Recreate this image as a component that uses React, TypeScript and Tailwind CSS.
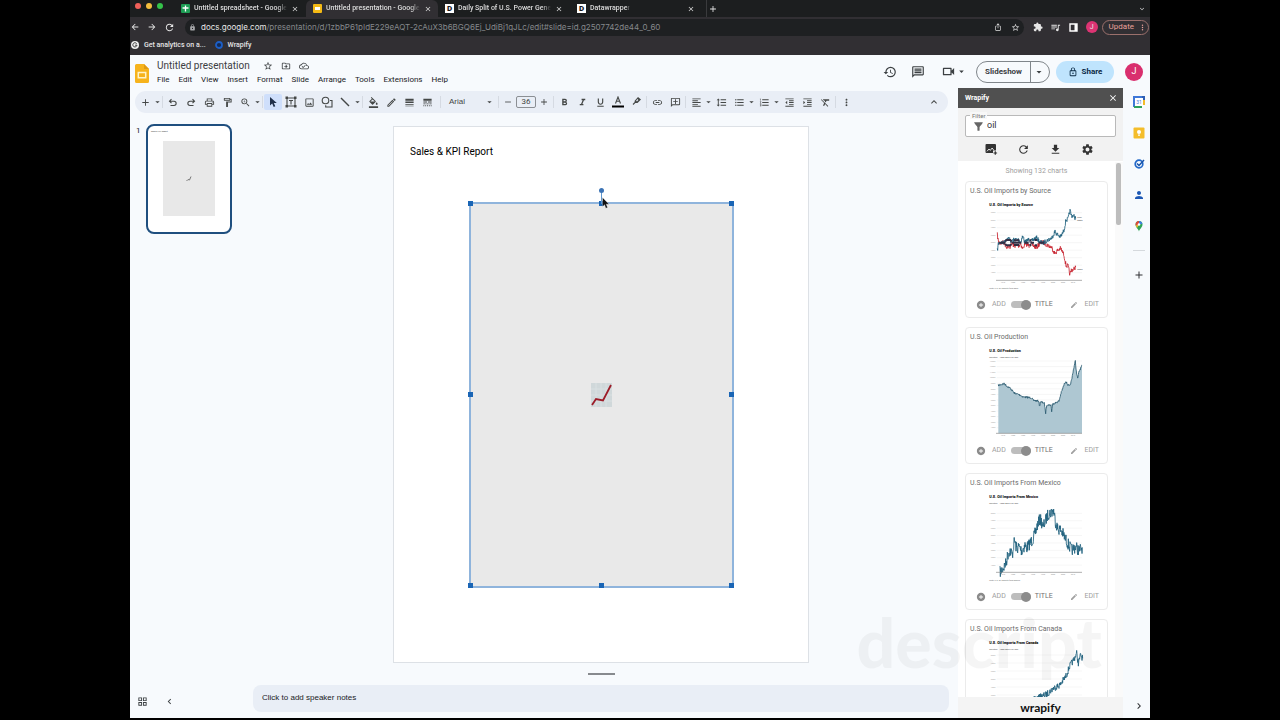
import type { ReactNode } from 'react';
import type { IconType } from 'react-icons';
import {
  MdAdd, MdAddCircle, MdArrowBack, MdArrowDropDown, MdArrowForward, MdChevronLeft, MdChevronRight, MdClose,
  MdEdit, MdExpandLess, MdExpandMore, MdExtension, MdFileDownload, MdFilterAlt, MdFormatAlignLeft, MdFormatBold,
  MdFormatClear, MdFormatColorFill, MdFormatIndentDecrease, MdFormatIndentIncrease, MdFormatItalic,
  MdFormatLineSpacing, MdFormatListBulleted, MdFormatListNumbered, MdFormatUnderlined, MdHistory, MdInsertLink,
  MdIosShare, MdLineStyle, MdLineWeight, MdLock, MdMoreVert, MdOutlineAddComment, MdOutlineCloudDone,
  MdOutlineComment, MdOutlineDriveFileMove, MdOutlineEdit, MdOutlineFormatPaint, MdOutlineGridView, MdOutlineImage,
  MdOutlineLock, MdOutlinePrint, MdOutlineVideocam, MdPerson, MdQueueMusic, MdRefresh, MdRemove, MdSettings,
  MdStarBorder, MdZoomIn,
} from 'react-icons/md';

type Point = [number, number];

interface Chart {
  title: string;
  subtitle?: string;
  footnote?: string;
  lines: { points: Point[]; noise: number; color: string; area?: boolean }[];
  gridTop: number;
  gridStep: number;
  axis: number;
}

const MENUS = ['File', 'Edit', 'View', 'Insert', 'Format', 'Slide', 'Arrange', 'Tools', 'Extensions', 'Help'];

const BLUE = '#1d5f7c';
const RED = '#c7202c';

const SOURCE: Point[] = [
  [34, 152], [37, 132], [42, 126], [50, 129], [56, 126], [60, 116], [72, 116], [76, 126], [84, 119], [98, 119],
  [104, 126], [109, 111], [113, 113], [116, 127], [128, 119], [136, 124], [146, 116], [152, 114], [160, 124],
  [170, 130], [182, 122], [197, 114], [207, 95], [214, 104], [224, 111], [234, 91], [240, 60], [246, 58],
  [252, 32], [256, 46], [263, 48], [269, 55],
];
const MIRROR: Point[] = SOURCE.map(([x, y]) => [x, 256 - y]);

const CHARTS: Chart[] = [
  {
    title: 'U.S. Oil Imports by Source',
    footnote: 'Note: U.S. Oil Imports from Opec',
    lines: [
      { points: MIRROR, noise: 14, color: RED },
      { points: SOURCE, noise: 14, color: BLUE },
    ],
    gridTop: 38,
    gridStep: 22.5,
    axis: 241,
  },
  {
    title: 'U.S. Oil Production',
    subtitle: 'Monthly · 1000 Bbls Per Day',
    lines: [
      {
        points: [
          [37, 118], [55, 113], [62, 120], [72, 126], [85, 141], [102, 147], [112, 153], [135, 155], [142, 163],
          [158, 165], [161, 182], [163, 167], [175, 172], [179, 201], [182, 177], [195, 177], [197, 196], [200, 174],
          [210, 170], [219, 165], [225, 142], [232, 122], [239, 105], [245, 116], [251, 121], [257, 102], [262, 72],
          [268, 45], [271, 77], [275, 98], [279, 77], [288, 59],
        ],
        noise: 6,
        color: '#2a5a70',
        area: true,
      },
    ],
    gridTop: 45,
    gridStep: 16.7,
    axis: 262,
  },
  {
    title: 'U.S. Oil Imports From Mexico',
    subtitle: 'Monthly · 1000 Bbls Per Day',
    footnote: 'Note: U.S. Oil Imports from Mexico',
    lines: [
      {
        points: [
          [42, 240], [46, 236], [54, 224], [60, 214], [65, 189], [72, 174], [79, 189], [85, 145], [92, 170], [99, 164],
          [107, 176], [117, 160], [122, 168], [132, 154], [142, 140], [149, 119], [157, 89], [163, 82], [172, 104],
          [179, 84], [187, 66], [197, 60], [203, 57], [209, 90], [215, 110], [225, 114], [235, 134], [245, 154],
          [257, 174], [269, 164], [279, 176], [289, 166],
        ],
        noise: 36,
        color: BLUE,
      },
    ],
    gridTop: 64,
    gridStep: 22.2,
    axis: 241,
  },
  {
    title: 'U.S. Oil Imports From Canada',
    subtitle: 'Monthly · 1000 Bbls Per Day',
    lines: [
      {
        points: [
          [42, 230], [90, 214], [130, 192], [162, 177], [182, 169], [202, 151], [222, 141], [232, 126], [242, 111],
          [250, 86], [260, 71], [272, 46], [277, 76], [284, 51], [290, 61],
        ],
        noise: 20,
        color: BLUE,
      },
    ],
    gridTop: 51,
    gridStep: 24,
    axis: 241,
  },
];

// Adds repeatable jitter between the anchor points, so a series reads like monthly data
function trace(points: Point[], noise: number) {
  const out: string[] = [];
  let n = 7;
  for (let i = 0; i < points.length - 1; i++) {
    const [x0, y0] = points[i];
    const [x1, y1] = points[i + 1];
    const steps = Math.max(1, Math.round(x1 - x0));
    for (let s = 0; s < steps; s++) {
      n = (n * 16807) % 2147483647;
      const jitter = (n / 2147483647 - 0.5) * noise;
      out.push(`${(x0 + ((x1 - x0) * s) / steps).toFixed(1)} ${(y0 + ((y1 - y0) * s) / steps + jitter).toFixed(1)}`);
    }
  }
  out.push(points[points.length - 1].join(' '));
  return 'M' + out.join('L');
}

function ChartPreview({ chart }: { chart: Chart }) {
  const rows = Math.round((chart.axis - chart.gridTop) / chart.gridStep);
  return (
    <svg viewBox="3 0 300 282" className="mx-auto mt-1 h-[94px] w-[100px] font-[Roboto]">
      <text x="10" y="19" fontSize="11" fontWeight="900" fill="#111">{chart.title}</text>
      {chart.subtitle && <text x="10" y="35" fontSize="7" fill="#555">{chart.subtitle}</text>}
      {Array.from({ length: rows }, (_, i) => (
        <g key={i}>
          <path d={`M32 ${chart.gridTop + i * chart.gridStep}H288`} stroke="#ececec" strokeWidth="1.5" />
          <text x="28" y={chart.gridTop + i * chart.gridStep + 2} fontSize="6" textAnchor="end" fill="#aaa">
            {(rows - i) * 1000}
          </text>
        </g>
      ))}
      {chart.lines.map((line, i) => {
        const d = trace(line.points, line.noise);
        return (
          <g key={i}>
            {line.area && <path d={`${d}V${chart.axis}H37Z`} fill="#aec7d2" />}
            <path d={d} fill="none" stroke={line.color} strokeWidth="2.5" strokeLinejoin="round" />
          </g>
        );
      })}
      {chart.lines.length > 1 && (
        <g>
          <path
            d="M40 128h18M58 124l3-4h12l3 4M58 132l3 4h12l3-4M78 128h28M84 121h16M84 135h16M117 128h11M130 121h6M130 135h6M134 128h10M146 120h7M146 136h7M158 128h16"
            fill="none"
            stroke="#332f45"
            strokeWidth="6"
          />
          <g fontSize="7" fill="#444">
            <text x="274" y="53">Non-</text>
            <text x="274" y="62">Opec</text>
            <text x="274" y="210">Opec</text>
          </g>
        </g>
      )}
      <path d={`M30 ${chart.axis}H288`} stroke="#888" strokeWidth="2" />
      {[1975, 1980, 1985, 1990, 1995, 2000, 2005, 2010].map((year, i) => (
        <text key={year} x={44 + i * 30} y={chart.axis + 9} fontSize="6" fill="#999">{year}</text>
      ))}
      {chart.footnote && <text x="10" y="268" fontSize="6" fill="#666">{chart.footnote}</text>}
    </svg>
  );
}

function ChartCard({ chart }: { chart: Chart }) {
  return (
    <article className="rounded-sm border border-[#ebebeb] bg-white px-1 pt-1 pb-1.5">
      <h3 className="text-[7px] leading-[10px] text-[#6b6b6b]">{chart.title}</h3>
      <ChartPreview chart={chart} />
      <div className="mt-1 flex h-[13px] items-center text-[7px] text-[#a0a0a0]">
        <button className="ml-1.5 flex items-center gap-1.5">
          <MdAddCircle className="size-[10px] text-[#8a8a8a]" />
          ADD
        </button>
        <label className="ml-[5px] flex items-center gap-1 text-[#707070]">
          <input
            type="checkbox"
            defaultChecked
            className="relative h-[7px] w-5 appearance-none rounded-full bg-[#bdbdbd] after:absolute after:-top-px after:right-0 after:size-[10px] after:rounded-full after:bg-[#8c8c8c]"
          />
          TITLE
        </label>
        <button className="mr-1 ml-auto flex items-center gap-1.5">
          <MdEdit className="size-2" />
          EDIT
        </button>
      </div>
    </article>
  );
}

function Tab({ icon, title, active }: { icon: ReactNode; title: string; active?: boolean }) {
  return (
    <div className={`flex w-[132px] items-center gap-1 px-[7px] ${active ? 'rounded-t-md bg-[#312f33]' : ''}`}>
      {icon}
      <span className="mask-r-from-90% text-[7px] font-medium whitespace-nowrap text-[#dcdcdc]">{title}</span>
      <button aria-label="Close tab" className="ml-auto"><MdClose className="size-[8px] text-[#dcdcdc]" /></button>
    </div>
  );
}

function SheetsIcon() {
  return (
    <svg viewBox="0 0 9 9" className="size-[9px] shrink-0">
      <rect width="9" height="9" rx="1" fill="#1e9e55" />
      <path d="M4.5 1.5v6M1.5 4h6" stroke="#fff" strokeWidth="1.3" />
    </svg>
  );
}

function SlidesTabIcon() {
  return (
    <svg viewBox="0 0 9 9" className="size-[9px] shrink-0">
      <rect width="9" height="9" rx="1" fill="#f5ba15" />
      <path d="M2 3h5v3H2z" fill="#fff" />
    </svg>
  );
}

function DatawrapperIcon() {
  return (
    <span className="flex size-[9px] shrink-0 items-center justify-center bg-white text-[8px] leading-none font-black text-[#18191b]">D</span>
  );
}

function Tool({ icon: Icon, label, flip }: { icon: IconType; label: string; flip?: boolean }) {
  return (
    <button aria-label={label} className="flex w-[18px] shrink-0 justify-center">
      <Icon className={flip ? 'size-[11px] -scale-x-100' : 'size-[11px]'} />
    </button>
  );
}

function Drawn({ label, children, active }: { label: string; children: ReactNode; active?: boolean }) {
  return (
    <button
      aria-label={label}
      className={`flex h-4 w-[18px] shrink-0 items-center justify-center rounded-xs ${active ? 'bg-[#cfdffb]' : ''}`}
    >
      <svg viewBox="0 0 12 12" className="size-[12px]" fill="none" stroke="currentColor" strokeWidth="1.1">{children}</svg>
    </button>
  );
}

const Caret = () => <MdArrowDropDown className="h-[10px] w-[7px] shrink-0 scale-150" />;
const Separator = () => <span className="mx-px h-3 w-px shrink-0 bg-[#d5dae2]" />;

function Toolbar() {
  return (
    <div className="mr-[10px] ml-[5px] flex h-[22px] items-center rounded-full bg-[#e9eef6] pl-px text-[#444746]">
      <Tool icon={MdAdd} label="New slide" />
      <Caret />
      <Separator />
      <Drawn label="Undo"><path d="M3.5 9.500h3.500a2 2 0 0 0 0-4.300H2.600M4.500 3.200 2.500 5.200l2 2" /></Drawn>
      <Drawn label="Redo"><path d="M8.500 9.500H5a2 2 0 0 1 0-4.300h4.400M7.500 3.200l2 2-2 2" /></Drawn>
      <Tool icon={MdOutlinePrint} label="Print" />
      <Tool icon={MdOutlineFormatPaint} label="Paint format" />
      <Tool icon={MdZoomIn} label="Zoom" />
      <Caret />
      <Separator />
      <Drawn label="Select" active>
        <path d="M3 1v8.600l2.200-2 1.500 3.300 1.600-.7-1.500-3.200h3z" fill="#1f2f4a" stroke="none" />
      </Drawn>
      <Drawn label="Text box">
        <path d="M2 2h8v8H2zM4 4.500h4M6 4.500V8.500" />
        <path d="M.5.500h2.500V3H.5zM9 .500h2.500V3H9zM.5 9H3v2.500H.5zM9 9h2.500v2.500H9z" fill="currentColor" stroke="none" />
      </Drawn>
      <Tool icon={MdOutlineImage} label="Insert image" />
      <Drawn label="Shape">
        <circle cx="4.500" cy="4.500" r="3.300" />
        <path d="M9 4.500h2v6.500H4.700V9.200" />
      </Drawn>
      <Drawn label="Line"><path d="m2 2 8 8" strokeWidth="1.400" /></Drawn>
      <Caret />
      <Separator />
      <Tool icon={MdFormatColorFill} label="Fill color" />
      <Tool icon={MdOutlineEdit} label="Border color" />
      <Tool icon={MdLineWeight} label="Border weight" />
      <Tool icon={MdLineStyle} label="Border dash" />
      <span className="mx-1 h-3 w-px shrink-0 bg-[#d5dae2]" />
      <button className="flex w-[52px] items-center justify-between pr-1 pl-1 font-['Liberation_Sans'] text-[8px]">
        Arial
        <Caret />
      </button>
      <Separator />
      <button aria-label="Decrease font size" className="flex w-4 justify-center"><MdRemove className="size-[10px]" /></button>
      <input
        aria-label="Font size"
        defaultValue="36"
        className="h-3 w-5 rounded-xs border border-[#8b8f94] text-center text-[8px]"
      />
      <button aria-label="Increase font size" className="flex w-4 justify-center"><MdAdd className="size-[10px]" /></button>
      <Separator />
      <Tool icon={MdFormatBold} label="Bold" />
      <Tool icon={MdFormatItalic} label="Italic" />
      <Tool icon={MdFormatUnderlined} label="Underline" />
      <Drawn label="Text color">
        <path d="M3.500 7.500 6 1l2.500 6.500M4.300 5.300h3.400" />
        <path d="M0 10.500h12" stroke="#000" strokeWidth="2" />
      </Drawn>
      <Drawn label="Highlight color">
        <path d="m4.500 5 3.500-4L11 3.500 7.500 7H5z" fill="currentColor" stroke="none" />
        <path d="m6.500 5 1.500-1.500" stroke="#e9eef6" />
        <path d="m3 8.500 2-2" />
      </Drawn>
      <Separator />
      <Tool icon={MdInsertLink} label="Insert link" />
      <Tool icon={MdOutlineAddComment} label="Add comment" flip />
      <Separator />
      <Tool icon={MdFormatAlignLeft} label="Align" />
      <Caret />
      <Tool icon={MdFormatLineSpacing} label="Line spacing" />
      <Tool icon={MdFormatListBulleted} label="Bulleted list" />
      <Caret />
      <Tool icon={MdFormatListNumbered} label="Numbered list" />
      <Caret />
      <Tool icon={MdFormatIndentDecrease} label="Decrease indent" />
      <Tool icon={MdFormatIndentIncrease} label="Increase indent" />
      <Tool icon={MdFormatClear} label="Clear formatting" />
      <Separator />
      <Tool icon={MdMoreVert} label="More" />
      <button aria-label="Hide menus" className="mr-2 ml-auto"><MdExpandLess className="size-3" /></button>
    </div>
  );
}

function BrowserChrome() {
  return (
    <div className="bg-[#312f33] text-[#e6e6e6]">
      <div className="flex h-[17px] bg-[#1c1e1f]">
        <div className="flex w-11 gap-[5px] pt-[3px] pl-[5px]">
          <span className="size-[6px] rounded-full bg-[#f0605a]" />
          <span className="size-[6px] rounded-full bg-[#f2bc3d]" />
          <span className="size-[6px] rounded-full bg-[#35c24a]" />
        </div>
        <Tab icon={<SheetsIcon />} title="Untitled spreadsheet - Google" />
        <Tab icon={<SlidesTabIcon />} title="Untitled presentation - Google" active />
        <Tab icon={<DatawrapperIcon />} title="Daily Split of U.S. Power Gene" />
        <Tab icon={<DatawrapperIcon />} title="Datawrapper" />
        <button aria-label="New tab" className="ml-1 border-l border-[#3a3b3d] pl-px"><MdAdd className="size-[10px]" /></button>
        <button aria-label="Search tabs" className="mr-1 ml-auto"><MdExpandMore className="size-2" /></button>
      </div>
      <div className="flex h-5 items-center pr-px">
        <button aria-label="Back" className="flex w-[17px]"><MdArrowBack className="size-[10px]" /></button>
        <button aria-label="Forward" className="flex w-[17px]"><MdArrowForward className="size-[10px]" /></button>
        <button aria-label="Reload" className="flex w-[21px]"><MdRefresh className="size-[11px]" /></button>
        <div className="flex h-[17px] flex-1 items-center rounded-full bg-[#1e2022] pr-1 pl-1">
          <MdLock className="size-[7px] text-[#a5a7a9]" />
          <span className="ml-[5px] flex-1 font-[Inter] text-[8px] text-[#85888b]">
            <span className="text-[#e8e8e8]">docs.google.com</span>
            /presentation/d/1zbbP61pIdE229eAQT-2cAuX3b6BGQ6Ej_UdiBj1qJLc/edit#slide=id.g2507742de44_0_60
          </span>
          <MdIosShare className="size-[8px]" />
          <MdStarBorder className="ml-[9px] size-[9px]" />
        </div>
        <MdExtension className="ml-[9px] size-[10px]" />
        <MdQueueMusic className="ml-[7px] size-[11px]" />
        <svg viewBox="0 0 9 9" className="ml-2 size-[9px]">
          <path d="M1 1h7v7H1z" fill="none" stroke="#fff" strokeWidth="1.400" />
          <path d="M5.500 1H8v7H5.500z" fill="#fff" />
        </svg>
        <span className="ml-2 flex size-3 items-center justify-center rounded-full bg-[#dd3473] text-[7px]">J</span>
        <button className="ml-1 flex h-[15px] items-center rounded-full border border-[#9b706c] pr-px pl-1.5 text-[8px] text-[#e9a29b]">
          Update
          <MdMoreVert className="ml-1 size-[9px]" />
        </button>
      </div>
      <div className="flex h-[18px] items-center pb-0.5 pl-px text-[7px] font-medium">
        <a href="#analytics" className="flex items-center gap-[5px]">
          <svg viewBox="0 0 8 8" className="size-2">
            <circle cx="4" cy="4" r="4" fill="#eee" />
            <path d="M5.700 2.700A2.100 2.100 0 1 0 6 4.200H4" fill="none" stroke="#444" />
          </svg>
          Get analytics on a...
        </a>
        <a href="#wrapify" className="ml-[9px] flex items-center gap-[5px]">
          <svg viewBox="0 0 8 8" className="size-2">
            <circle cx="4" cy="4" r="3" fill="#132a55" stroke="#1c5fc7" strokeWidth="1.800" />
          </svg>
          Wrapify
        </a>
      </div>
    </div>
  );
}

function DocHeader() {
  return (
    <header className="flex h-[33px] items-center pr-[7px] pl-[5px] text-[#3c4043]">
      <svg viewBox="0 0 14 19" className="mt-1 h-[19px] w-[14px]">
        <path d="M1.500 0H9l5 5v12.500a1.500 1.500 0 0 1-1.500 1.500h-11A1.500 1.500 0 0 1 0 17.500v-16A1.500 1.500 0 0 1 1.500 0z" fill="#f6b31c" />
        <path d="M9 0l5 5H9z" fill="#e09a12" />
        <path d="M3.300 8.500h7.400v5.200H3.300z" fill="none" stroke="#fff3c9" strokeWidth="1.500" />
      </svg>
      <div className="ml-2 pt-[3px]">
        <div className="flex items-center">
          <h1 className="text-[10px] leading-3">Untitled presentation</h1>
          <MdStarBorder className="ml-[13px] size-[10px]" />
          <MdOutlineDriveFileMove className="ml-2 size-[10px]" />
          <MdOutlineCloudDone className="ml-2 size-[10px]" />
        </div>
        <nav className="mt-0.5 flex gap-[9px] font-['Liberation_Sans'] text-[8px] leading-3 text-[#202124]">
          {MENUS.map(menu => <button key={menu} className="font-[Roboto]">{menu}</button>)}
        </nav>
      </div>
      <div className="ml-auto flex items-center">
        <button aria-label="History"><MdHistory className="size-[14px]" /></button>
        <button aria-label="Comments" className="ml-[14px]"><MdOutlineComment className="size-[14px] -scale-x-100" /></button>
        <button aria-label="Join a call" className="ml-4 flex items-center">
          <MdOutlineVideocam className="size-[15px]" />
          <MdArrowDropDown className="size-[11px]" />
        </button>
        <div className="ml-[9px] flex h-[22px] items-center rounded-full border border-[#80868b] text-[8px] font-bold">
          <button className="pr-2 pl-2">Slideshow</button>
          <button aria-label="Slideshow options" className="flex h-full items-center border-l border-[#80868b] pr-1 pl-0.5">
            <MdArrowDropDown className="size-3" />
          </button>
        </div>
        <button className="ml-1.5 flex h-[22px] w-[58px] items-center justify-center gap-1 rounded-full bg-[#bfe4fd] text-[8px] font-bold text-[#0b2a45]">
          <MdOutlineLock className="size-[10px]" />
          Share
        </button>
        <span className="ml-[11px] flex size-[18px] items-center justify-center rounded-full bg-[#d92f6e] text-[9px] text-white">J</span>
      </div>
    </header>
  );
}

function Filmstrip() {
  return (
    <aside className="flex w-[123px] shrink-0 flex-col justify-between pt-[11px]">
      <div className="flex pl-1.5">
        <span className="w-[10px] pt-0.5 text-[8px] leading-[10px] text-[#202124]">1</span>
        <div className="h-[110px] w-[86px] rounded-lg border-2 border-[#1f4f7f] bg-white px-[15px] pt-[3px]">
          <p className="-ml-3 text-[2px] leading-[4px] text-[#333]">Sales &amp; KPI Report</p>
          <div className="mt-2 flex h-[75px] w-[52px] items-center justify-center bg-[#e8e8e8]">
            <svg viewBox="0 0 6 6" className="size-[6px]"><path d="M.500 5 2 3.500l1.500.500L5 .500" fill="none" stroke="#777" /></svg>
          </div>
        </div>
      </div>
      <div className="flex items-center gap-4 pb-[11px] pl-[7px] text-[#3c4043]">
        <button aria-label="Grid view"><MdOutlineGridView className="size-[11px]" /></button>
        <button aria-label="Hide filmstrip"><MdChevronLeft className="size-[11px]" /></button>
      </div>
    </aside>
  );
}

const HANDLES = [
  'left-0 top-0', 'left-1/2 top-0', 'left-full top-0', 'left-0 top-1/2',
  'left-full top-1/2', 'left-0 top-full', 'left-1/2 top-full', 'left-full top-full',
];

function Slide() {
  return (
    <div className="relative mx-auto w-full max-w-[416px] flex-1 border border-[#dde1e6] bg-white">
      <p className="absolute top-[18px] left-4 text-[10px] leading-[14px] text-black">Sales &amp; KPI Report</p>
      <div className="absolute top-[75px] left-[75px] flex h-[386px] w-[265px] items-center justify-center border-2 border-[#8fb4dc] bg-[#e9e9e9]">
        <svg viewBox="0 0 21 24" className="h-6 w-[21px]">
          <path d="M0 0h21v24H0z" fill="#d0d8da" />
          <path d="M0 6h21M0 12h21M0 18h21M5 0v24M10 0v24M15 0v24" stroke="#d9e0e2" strokeWidth="1" />
          <path d="m1 22 4-6 7 1.500L20 2" fill="none" stroke="#9c1c28" strokeWidth="1.800" />
        </svg>
        {HANDLES.map(place => (
          <span key={place} className={`absolute -mt-[3px] -ml-[3px] size-[5px] bg-[#1a65b5] ${place}`} />
        ))}
        <span className="absolute -top-3 left-1/2 -ml-px h-3 w-px bg-[#5f97cf]" />
        <span className="absolute -top-4 left-1/2 -ml-[3px] size-[5px] rounded-full bg-[#3b73b5]" />
        <svg viewBox="0 0 8 12" className="absolute -top-[7px] left-[131px] h-3 w-2">
          <path d="M.500.500v9l2-1.800 1.400 3.500 1.700-.700L4.200 7.200H7z" fill="#111" stroke="#fff" strokeWidth=".3" />
        </svg>
      </div>
    </div>
  );
}

function WrapifyPanel() {
  return (
    <section className="flex w-[165px] shrink-0 flex-col bg-white">
      <div className="flex h-5 items-center justify-between bg-[#505050] pr-[5px] pl-[7px] text-white">
        <h2 className="text-[7px] font-bold">Wrapify</h2>
        <button aria-label="Close"><MdClose className="size-[10px]" /></button>
      </div>
      <div className="bg-[#f2f2f2] px-[7px] pt-[7px]">
        <div className="relative flex h-[22px] items-center rounded-xs border border-[#b9b9b9] bg-white pl-1.5">
          <label htmlFor="filter" className="absolute -top-1 left-1 bg-[#f8f8f8] px-0.5 text-[6px] leading-[7px] text-[#777]">Filter</label>
          <MdFilterAlt className="size-[13px] text-[#666]" />
          <input id="filter" defaultValue="oil" className="ml-0.5 w-24 text-[9px] text-[#333] outline-none" />
        </div>
        <div className="flex h-6 items-center justify-between pr-[22px] pl-[19px] text-[#333]">
          <button aria-label="Insert chart">
            <svg viewBox="0 0 13 12" className="h-3 w-[14px]">
              <path d="M2 1h8.500a1 1 0 0 1 1 1v5.500h-3V10H2a1 1 0 0 1-1-1V2a1 1 0 0 1 1-1z" fill="currentColor" />
              <path d="M2.500 8.300 4.500 6l1.300 1.400L7.600 5l1.700 2.200" fill="none" stroke="#f2f2f2" strokeWidth=".9" />
              <path d="M10.800 8.200v3.600M9 10h3.600" stroke="currentColor" strokeWidth="1.200" />
            </svg>
          </button>
          <button aria-label="Refresh"><MdRefresh className="size-[13px]" /></button>
          <button aria-label="Download"><MdFileDownload className="size-[13px]" /></button>
          <button aria-label="Settings"><MdSettings className="size-[13px]" /></button>
        </div>
      </div>
      <div className="flex min-h-0 flex-1 overflow-hidden pt-px">
        <div className="flex flex-1 flex-col gap-[9px] pl-[7px]">
          <p className="-mb-1 pt-1 text-center text-[7px] leading-[10px] text-[#a0a0a0]">Showing 132 charts</p>
          {CHARTS.map(chart => <ChartCard key={chart.title} chart={chart} />)}
        </div>
        <div className="ml-[7px] w-2 bg-[#fafafa] pt-px pl-px">
          <div className="h-[62px] w-[5px] rounded-xs bg-[#bdbdbd]" />
        </div>
      </div>
      <footer className="h-[21px] bg-[#f4f4f4] text-center font-[Lato] text-[12px] leading-[21px] font-bold text-[#111]">wrapify</footer>
    </section>
  );
}

function SideRail() {
  return (
    <aside className="flex w-[27px] shrink-0 flex-col items-center pt-2 pl-1 text-[#303134]">
      <div className="flex flex-col items-center gap-[19px]">
        <svg viewBox="0 0 12 12" className="size-3">
          <path d="M1.500 1.500h9v9h-9z" fill="#fff" />
          <path d="M1 11V1h8" fill="none" stroke="#3f78d8" strokeWidth="2" />
          <path d="M9 1h2v8" fill="none" stroke="#2f5fb3" strokeWidth="2" />
          <path d="M1 11h8" stroke="#2fa15a" strokeWidth="2" />
          <path d="M11 4v5" stroke="#f3bb2c" strokeWidth="2" />
          <text x="3.300" y="8" fontSize="5" fill="#3f78d8">31</text>
        </svg>
        <svg viewBox="0 0 12 12" className="size-3">
          <rect x=".5" y=".5" width="11" height="11" rx="1" fill="#f4bd2b" />
          <circle cx="6" cy="5" r="2" fill="#fff" />
          <path d="M5 7.600h2v1.200H5z" fill="#fff" />
        </svg>
        <svg viewBox="0 0 12 12" className="size-3">
          <circle cx="6" cy="6" r="3.800" fill="none" stroke="#2268c9" strokeWidth="1.700" />
          <path d="m4 5.500 2 2 5-5.500" fill="none" stroke="#1752a8" strokeWidth="1.500" />
        </svg>
        <MdPerson className="size-3 text-[#1d58b5]" />
        <svg viewBox="0 0 12 12" className="size-3">
          <path d="M6 11.500C5.500 9 2.500 7.500 2.500 4.500a3.500 3.500 0 0 1 7 0c0 3-3 4.500-3.500 7z" fill="#2fa457" />
          <path d="M2.700 5.500A3.500 3.500 0 0 1 6 1v3.500z" fill="#e04a3c" />
          <path d="M6 1a3.500 3.500 0 0 1 3.400 2.700L6 4.500z" fill="#3f7fe0" />
          <path d="M2.700 5.500 6 4.500 4 8z" fill="#f4bd2b" />
          <circle cx="6" cy="4.500" r="1.300" fill="#fff" />
        </svg>
      </div>
      <hr className="mt-[18px] w-3 border-[#d5d9dd]" />
      <button aria-label="Get add-ons" className="mt-[18px]"><MdAdd className="size-3" /></button>
      <button aria-label="Hide side panel" className="mt-auto mb-[6px]"><MdChevronRight className="size-3" /></button>
    </aside>
  );
}

export default function App() {
  return (
    <div className="h-screen overflow-hidden bg-black px-[130px] pb-0.5 font-[Roboto,sans-serif]">
      <div className="relative flex h-full flex-col bg-[#f7fafd]">
        <BrowserChrome />
        <DocHeader />
        <div className="flex min-h-0 flex-1">
          <main className="flex min-w-0 flex-1 flex-col pt-[3px]">
            <Toolbar />
            <div className="flex min-h-0 flex-1">
              <Filmstrip />
              <div className="flex flex-1 flex-col pt-[13px] pr-[9px] pb-1.5">
                <Slide />
                <div className="mx-auto mt-[10px] h-0.5 w-[27px] bg-[#878a8e]" />
                <textarea
                  aria-label="Speaker notes"
                  defaultValue="Click to add speaker notes"
                  className="mt-[10px] h-[27px] resize-none rounded-lg bg-[#e9eef6] px-[9px] pt-[7px] font-['Liberation_Sans'] text-[8px] leading-3 text-[#202124]"
                />
              </div>
            </div>
          </main>
          <WrapifyPanel />
          <SideRail />
        </div>
        <div aria-hidden className="pointer-events-none absolute right-12 bottom-9 font-[Lato] text-[68px] leading-[80px] font-black text-black/4">
          descript
        </div>
      </div>
    </div>
  );
}
